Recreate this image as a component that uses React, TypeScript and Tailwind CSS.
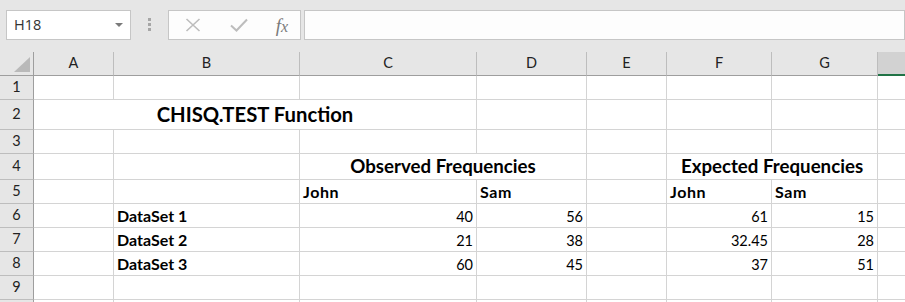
import React from "react";

type CellProps = {
  span?: string;
  className?: string;
  children?: React.ReactNode;
};

function Cell({ span = "", className = "", children }: CellProps) {
  return (
    <div
      className={`${span} flex items-end overflow-visible whitespace-nowrap border-r border-b border-[#d4d4d4] bg-white px-[3px] pb-[3px] leading-none text-black ${className}`}
    >
      {children}
    </div>
  );
}

function RowHead({ n }: { n: number | string }) {
  return (
    <div className="flex items-center justify-center border-r border-b border-r-[#9e9e9e] border-b-[#bdbdbd] bg-[#e6e6e6] text-[14.5px] leading-none text-[#222]">
      {n}
    </div>
  );
}

function ColHead({ l }: { l: string }) {
  return (
    <div className="flex items-center justify-center border-r border-b border-r-[#bdbdbd] border-b-[#9e9e9e] bg-[#e6e6e6] text-[14.5px] leading-none text-[#222]">
      {l}
    </div>
  );
}

const Num = ({ v }: { v: string }) => (
  <Cell className="justify-end text-[14.5px]">{v}</Cell>
);

const Bold = ({ children }: { children: React.ReactNode }) => (
  <Cell className="text-[16px] font-bold">{children}</Cell>
);

const Name = ({ children }: { children: React.ReactNode }) => (
  <Cell className="text-[16px] font-bold tracking-[0.6px]">{children}</Cell>
);

function EmptyRow({ n }: { n: number | string }) {
  return (
    <>
      <RowHead n={n} />
      <Cell />
      <Cell />
      <Cell />
      <Cell />
      <Cell />
      <Cell />
      <Cell />
      <Cell />
    </>
  );
}

function DataRow({ n, label, vals }: { n: number; label: string; vals: string[] }) {
  return (
    <>
      <RowHead n={n} />
      <Cell />
      <Bold>{label}</Bold>
      <Num v={vals[0]} />
      <Num v={vals[1]} />
      <Cell />
      <Num v={vals[2]} />
      <Num v={vals[3]} />
      <Cell />
    </>
  );
}

export default function App() {
  return (
    <div className="relative h-[302px] w-[905px] overflow-hidden bg-[#e6e6e6] font-[Lato,sans-serif]">
      {/* Formula bar */}
      <div className="flex h-[52px] items-start bg-[#e6e6e6]">
        <div className="ml-[6px] mt-[10px] flex h-[30px] w-[128px] items-center justify-between border border-[#c6c6c6] bg-white pl-[7px] pr-[7px]">
          <span className="font-['Open_Sans',sans-serif] text-[14.5px] leading-none text-[#333]">H18</span>
          <span className="h-0 w-0 border-x-[4px] border-t-[4px] border-x-transparent border-t-[#7a7a7a]" />
        </div>
        <div className="ml-[17px] mt-[18px] flex flex-col gap-[2px]">
          <span className="h-[3px] w-[3px] bg-[#a6a6a6]" />
          <span className="h-[3px] w-[3px] bg-[#a6a6a6]" />
          <span className="h-[3px] w-[3px] bg-[#a6a6a6]" />
        </div>
        <div className="ml-[17px] mt-[10px] flex h-[30px] w-[137px] items-center border border-[#c6c6c6] bg-[#fdfdfd]">
          <svg className="ml-[16px]" width="16" height="14" viewBox="0 0 16 14">
            <path d="M1.5 1 L14.5 13 M14.5 1 L1.5 13" stroke="#bdbdbd" strokeWidth="1.6" fill="none" />
          </svg>
          <svg className="ml-[29px]" width="18" height="14" viewBox="0 0 18 14">
            <path d="M1 7.5 L6.5 12.5 L17 1.5" stroke="#bdbdbd" strokeWidth="2" fill="none" />
          </svg>
          <span className="ml-[28px] font-['Liberation_Serif',serif] text-[19px] italic leading-none text-[#7a7a7a]">
            f<span className="text-[16px]">x</span>
          </span>
        </div>
        <div className="ml-[3px] mt-[10px] h-[30px] w-[620px] border border-[#c6c6c6] bg-[#fdfdfd]" />
      </div>

      {/* Sheet grid */}
      <div className="grid grid-cols-[34px_80px_186px_177px_110px_80px_105px_106px_100px] grid-rows-[24px_24px_30px_24px_26px_24px_24px_24px_24px_24px_24px]">
        {/* header row */}
        <div className="relative border-r border-b border-r-[#9e9e9e] border-b-[#9e9e9e] bg-[#e6e6e6]">
          <svg className="absolute left-[14px] top-[5px]" width="16" height="15" viewBox="0 0 16 15">
            <path d="M16 0 L16 15 L0 15 Z" fill="#b9b9b9" />
          </svg>
        </div>
        <ColHead l="A" />
        <ColHead l="B" />
        <ColHead l="C" />
        <ColHead l="D" />
        <ColHead l="E" />
        <ColHead l="F" />
        <ColHead l="G" />
        <div className="border-b-2 border-b-[#217346] bg-[#d2d2d2]" />

        {/* row 1 */}
        <EmptyRow n={1} />

        {/* row 2 */}
        <RowHead n={2} />
        <Cell span="col-span-3" className="justify-center pb-[5px] text-[20.3px] font-bold">
          CHISQ.TEST Function
        </Cell>
        <Cell />
        <Cell />
        <Cell />
        <Cell />
        <Cell />

        {/* row 3 */}
        <EmptyRow n={3} />

        {/* row 4 */}
        <RowHead n={4} />
        <Cell />
        <Cell />
        <Cell span="col-span-2" className="justify-center text-[18.7px] font-bold">
          Observed Frequencies
        </Cell>
        <Cell />
        <Cell span="col-span-2" className="justify-center text-[18.7px] font-bold">
          Expected Frequencies
        </Cell>
        <Cell />

        {/* row 5 */}
        <RowHead n={5} />
        <Cell />
        <Cell />
        <Name>John</Name>
        <Name>Sam</Name>
        <Cell />
        <Name>John</Name>
        <Name>Sam</Name>
        <Cell />

        <DataRow n={6} label="DataSet 1" vals={["40", "56", "61", "15"]} />
        <DataRow n={7} label="DataSet 2" vals={["21", "38", "32.45", "28"]} />
        <DataRow n={8} label="DataSet 3" vals={["60", "45", "37", "51"]} />

        <EmptyRow n={9} />
        <EmptyRow n="" />
      </div>
    </div>
  );
}
